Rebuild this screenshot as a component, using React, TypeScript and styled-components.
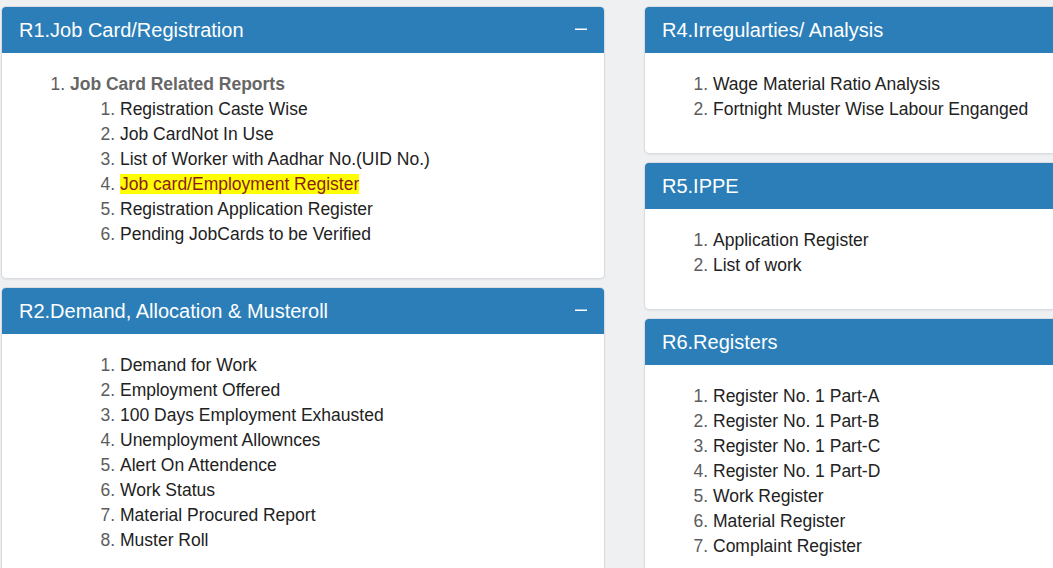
import React from "react";
import styled, { createGlobalStyle } from "styled-components";

interface IItem {
  label: string;
  highlight?: boolean;
}

interface IGroup {
  title?: string;
  items: IItem[];
}

interface IPanel {
  title: string;
  collapsible?: boolean;
  indent?: boolean;
  groups: IGroup[];
}

const leftPanels: IPanel[] = [
  {
    title: "R1.Job Card/Registration",
    collapsible: true,
    groups: [
      {
        title: "Job Card Related Reports",
        items: [
          { label: "Registration Caste Wise" },
          { label: "Job CardNot In Use" },
          { label: "List of Worker with Aadhar No.(UID No.)" },
          { label: "Job card/Employment Register", highlight: true },
          { label: "Registration Application Register" },
          { label: "Pending JobCards to be Verified" },
        ],
      },
    ],
  },
  {
    title: "R2.Demand, Allocation & Musteroll",
    collapsible: true,
    indent: true,
    groups: [
      {
        items: [
          { label: "Demand for Work" },
          { label: "Employment Offered" },
          { label: "100 Days Employment Exhausted" },
          { label: "Unemployment Allownces" },
          { label: "Alert On Attendence" },
          { label: "Work Status" },
          { label: "Material Procured Report" },
          { label: "Muster Roll" },
        ],
      },
    ],
  },
];

const rightPanels: IPanel[] = [
  {
    title: "R4.Irregularties/ Analysis",
    groups: [
      {
        items: [
          { label: "Wage Material Ratio Analysis" },
          { label: "Fortnight Muster Wise Labour Enganged" },
        ],
      },
    ],
  },
  {
    title: "R5.IPPE",
    groups: [
      {
        items: [{ label: "Application Register" }, { label: "List of work" }],
      },
    ],
  },
  {
    title: "R6.Registers",
    groups: [
      {
        items: [
          { label: "Register No. 1 Part-A" },
          { label: "Register No. 1 Part-B" },
          { label: "Register No. 1 Part-C" },
          { label: "Register No. 1 Part-D" },
          { label: "Work Register" },
          { label: "Material Register" },
          { label: "Complaint Register" },
        ],
      },
    ],
  },
];

function ItemList({ items }: { items: IItem[] }) {
  return (
    <>
      {items.map((item, index) => (
        <Item key={index}>
          {item.highlight ? <Highlight>{item.label}</Highlight> : item.label}
        </Item>
      ))}
    </>
  );
}

function Panel({ panel }: { panel: IPanel }) {
  return (
    <Card>
      <Header>
        <Title>{panel.title}</Title>
        {panel.collapsible && (
          <svg width="12" height="4" viewBox="0 0 12 4">
            <rect x="0" y="0.5" width="12" height="1.5" fill="#fff" />
          </svg>
        )}
      </Header>
      <Body>
        <List indent={panel.indent}>
          {panel.groups.map((group, index) =>
            group.title ? (
              <Item key={index}>
                <GroupTitle>{group.title}</GroupTitle>
                <List>
                  <ItemList items={group.items} />
                </List>
              </Item>
            ) : (
              <ItemList key={index} items={group.items} />
            )
          )}
        </List>
      </Body>
    </Card>
  );
}

export default function App() {
  return (
    <>
      <GlobalStyle />
      <Page>
        <Column>
          {leftPanels.map((panel, index) => (
            <Panel key={index} panel={panel} />
          ))}
        </Column>
        <Column>
          {rightPanels.map((panel, index) => (
            <Panel key={index} panel={panel} />
          ))}
        </Column>
      </Page>
    </>
  );
}

const GlobalStyle = createGlobalStyle`
  html, body {
    margin: 0;
    background: #eff0f2;
    overflow: hidden;
  }
  body {
    font-family: "Liberation Sans", Arial, sans-serif;
  }
`;

const Page = styled.div`
  display: grid;
  grid-template-columns: 604px 604px;
  column-gap: 39px;
  padding: 6px 0 0 1px;
  width: max-content;
`;

const Column = styled.div`
  display: flex;
  flex-direction: column;
  gap: 8px;
`;

const Card = styled.div`
  background: #fff;
  border: 1px solid #d9dde2;
  border-radius: 5px;
  box-shadow: 0 1px 2px rgba(0, 0, 0, 0.06);
  overflow: hidden;
`;

const Header = styled.div`
  display: flex;
  align-items: center;
  justify-content: space-between;
  height: 47px;
  box-sizing: border-box;
  padding: 0 18px;
  margin: -1px -1px 0 -1px;
  background: #2b7eb8;
  color: #fff;
`;

const Title = styled.div`
  font-size: 20px;
  line-height: 22px;
`;

const Body = styled.div`
  padding: 19px 18px 18.5px;
`;

const List = styled.ol<{ indent?: boolean }>`
  margin: 0;
  padding-left: ${(props) => (props.indent ? "100px" : "50px")};
  & & {
    margin: 0;
  }
  ${Body} > & {
    margin-bottom: 12.5px;
  }
`;

const Item = styled.li`
  font-size: 17.5px;
  line-height: 25px;
  color: #222;
  &::marker {
    color: #5c5c5c;
  }
`;

const GroupTitle = styled.span`
  font-weight: bold;
  color: #666;
`;

const Highlight = styled.span`
  background: #ffff00;
  color: #8b1c1c;
`;
